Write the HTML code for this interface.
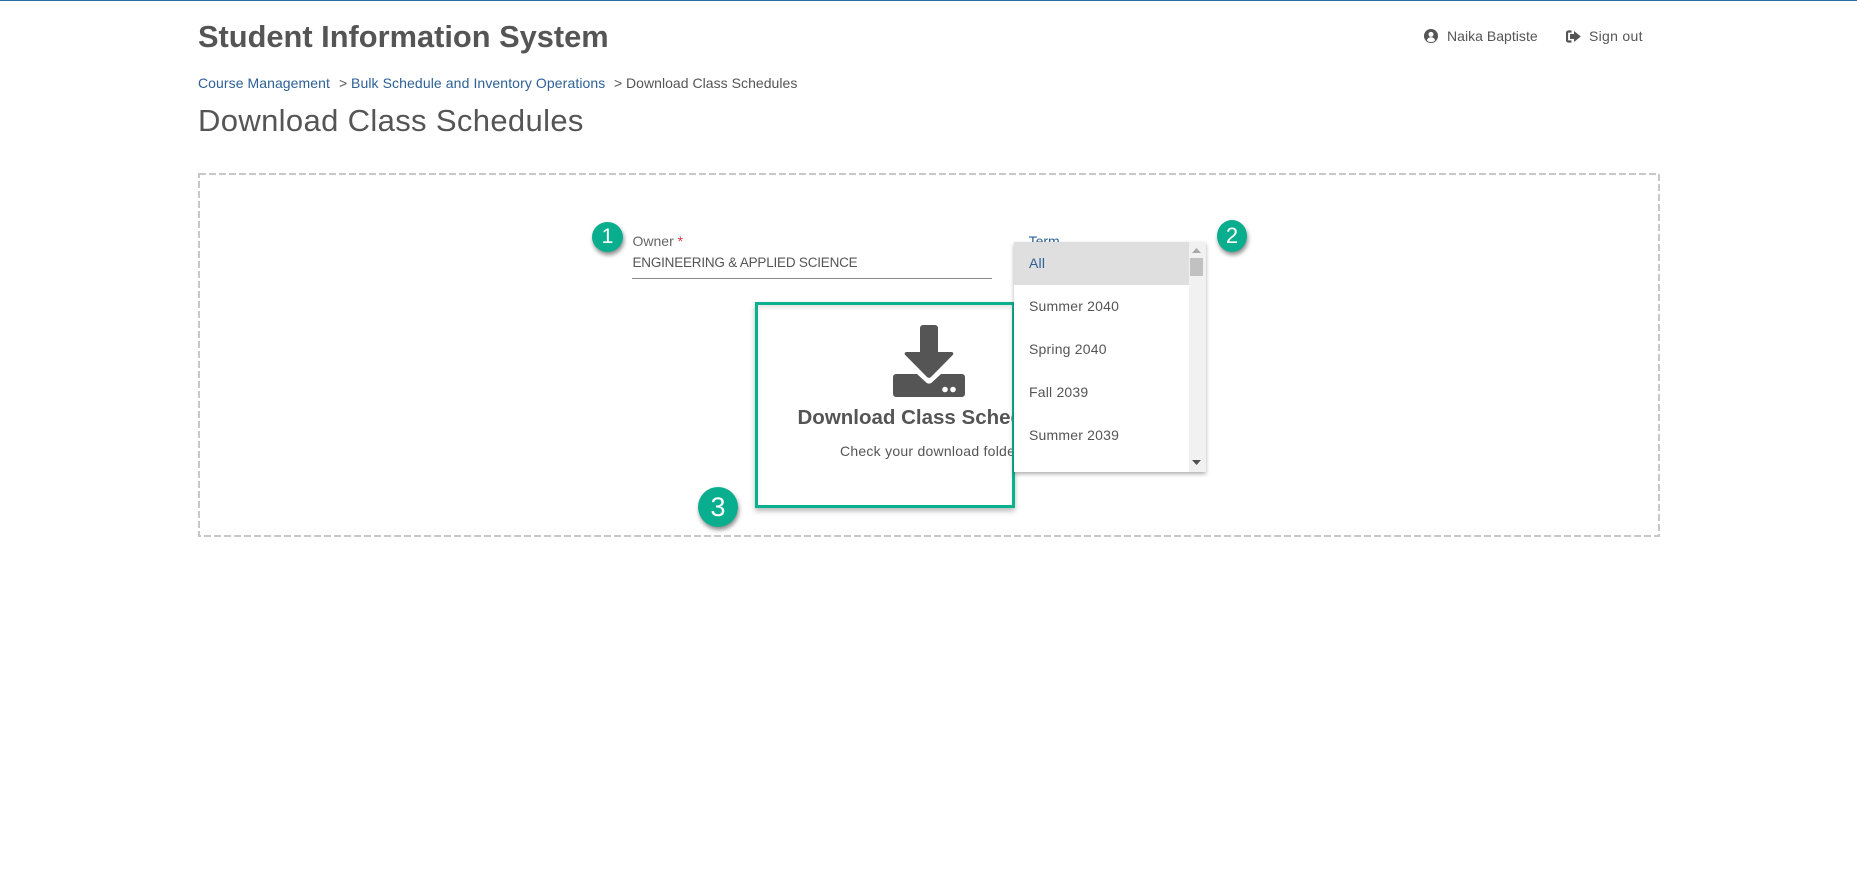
<!DOCTYPE html>
<html lang="en">
<head>
<meta charset="utf-8">
<title>Download Class Schedules</title>
<style>
html,body{margin:0;padding:0;background:#fff;width:1857px;height:876px;overflow:hidden}
body{position:relative;font-family:"Liberation Sans",sans-serif;color:#555}
.t{position:absolute;white-space:nowrap;font-size:14px;line-height:20px}
.b{color:#2d6196}
.badge{position:absolute;background:#09ae8e;color:#fff;border-radius:50%;box-shadow:1px 3px 4px rgba(0,0,0,.45);display:flex;align-items:center;justify-content:center}
.item{position:absolute;left:0;width:175px;height:43px;line-height:43px;padding-left:15px;box-sizing:border-box;font-size:14px;letter-spacing:.2px;color:#555;white-space:nowrap}
</style>
</head>
<body>
<div style="position:absolute;left:0;top:0;width:1857px;height:1px;background:#2e6da4"></div>

<div class="t" style="left:198px;top:19px;font-size:30.8px;line-height:36px;font-weight:bold;color:#555">Student Information System</div>

<svg style="position:absolute;left:1424px;top:29px" width="14" height="14" viewBox="0 0 14 14"><circle cx="7" cy="7" r="7" fill="#555"/><circle cx="7" cy="5.4" r="2.5" fill="#fff"/><path d="M2.8 11.2c.8-2 2.4-2.9 4.2-2.9s3.4.9 4.2 2.9a5.8 5.8 0 0 1-8.4 0z" fill="#fff"/></svg>
<div class="t" style="left:1447px;top:26px;font-size:14px;letter-spacing:.03px;color:#555">Naika Baptiste</div>

<svg style="position:absolute;left:1566px;top:30px" width="15" height="13" viewBox="0 0 15 13"><path d="M5.5 1.5H2.5A1.5 1.5 0 0 0 1 3v7a1.5 1.5 0 0 0 1.5 1.500H5.500" fill="none" stroke="#555" stroke-width="2.2"/><path d="M4 4H8V1L14.800 6.500L8 12V9H4z" fill="#555"/></svg>
<div class="t" style="left:1589px;top:26px;font-size:14px;letter-spacing:.3px;color:#555">Sign out</div>

<div class="t b" style="left:198px;top:73px;letter-spacing:.07px">Course Management</div>
<div class="t" style="left:339px;top:73px">&gt;</div>
<div class="t b" style="left:351px;top:73px;letter-spacing:.1px">Bulk Schedule and Inventory Operations</div>
<div class="t" style="left:614px;top:73px">&gt;</div>
<div class="t" style="left:626px;top:73px;letter-spacing:.04px">Download Class Schedules</div>

<div class="t" style="left:198px;top:101px;font-size:31px;line-height:40px;letter-spacing:.35px;color:#555">Download Class Schedules</div>

<svg style="position:absolute;left:198px;top:173px" width="1462" height="364"><rect x="1" y="1" width="1460" height="362" fill="none" stroke="#c6c8cb" stroke-width="2" stroke-dasharray="7 3"/></svg>

<div class="t" style="left:632.5px;top:231px;font-size:14px;color:#666">Owner <span style="color:#e0333c">*</span></div>
<div class="t" style="left:632.5px;top:253px;font-size:13.5px;letter-spacing:-.21px;color:#555">ENGINEERING &amp; APPLIED SCIENCE</div>
<div style="position:absolute;left:632px;top:278px;width:360px;height:1px;background:#888"></div>

<div class="t b" style="left:1028.6px;top:231px">Term</div>

<!-- green highlighted box -->
<div style="position:absolute;left:755px;top:302px;width:260px;height:206px;box-sizing:border-box;border:3px solid #0ab18f;background:#fff;box-shadow:0 3px 5px rgba(0,0,0,.28),inset 0 3px 4px rgba(0,0,0,.1);overflow:hidden">
  <div class="t" style="left:39.5px;top:99px;font-size:20.5px;line-height:28px;font-weight:bold;color:#555">Download Class Schedules</div>
  <div class="t" style="left:82px;top:136px;font-size:14px;letter-spacing:.25px;color:#555">Check your download folder</div>
  <svg style="position:absolute;left:135px;top:20px" width="74" height="74" viewBox="0 0 74 74">
    <path d="M27 3a3 3 0 0 1 3-3h12a3 3 0 0 1 3 3v24h13.5c1.7 0 2.400 1.700 1.400 2.900L38 52c-1.100 1.100-2.900 1.100-4 0L12.100 29.900c-1-1.200-.3-2.900 1.400-2.900H27z" fill="#555"/>
    <path d="M3 49h21l9.200 8.500c1.700 1.500 3.900 1.500 5.600 0L48 49h21a3 3 0 0 1 3 3v17a3 3 0 0 1-3 3H3a3 3 0 0 1-3-3V52a3 3 0 0 1 3-3z" fill="#555"/>
    <circle cx="52" cy="64.5" r="2.800" fill="#fff"/><circle cx="60" cy="64.5" r="2.800" fill="#fff"/>
  </svg>
</div>

<!-- dropdown -->
<div style="position:absolute;left:1014px;top:242px;width:192px;height:230px;background:#fff;box-shadow:0 2px 4px rgba(0,0,0,.32);overflow:hidden">
  <div class="item" style="top:0;background:#dfdfdf;color:#2d6196">All</div>
  <div class="item" style="top:43px">Summer 2040</div>
  <div class="item" style="top:86px">Spring 2040</div>
  <div class="item" style="top:129px">Fall 2039</div>
  <div class="item" style="top:172px">Summer 2039</div>
  <div style="position:absolute;left:175px;top:0;width:17px;height:230px;background:#f1f1f1"></div>
  <div style="position:absolute;left:176px;top:16px;width:13px;height:18px;background:#c1c1c1"></div>
  <svg style="position:absolute;left:178px;top:6px" width="9" height="5"><path d="M4.5 0L9 5H0z" fill="#a8a8a8"/></svg>
  <svg style="position:absolute;left:178px;top:218px" width="9" height="5"><path d="M0 0H9L4.500 5z" fill="#505050"/></svg>
</div>

<div class="badge" style="left:592px;top:222px;width:31px;height:30px;font-size:21px">1</div>
<div class="badge" style="left:1217px;top:220px;width:30px;height:32px;font-size:22px">2</div>
<div class="badge" style="left:698px;top:487px;width:40px;height:40px;font-size:27px">3</div>
</body>
</html>
